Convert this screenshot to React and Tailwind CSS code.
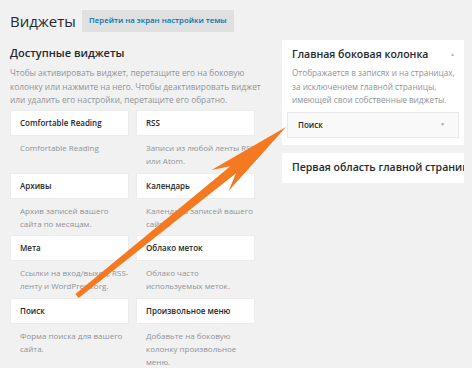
const widgets = [
  { title: "Comfortable Reading", desc: ["Comfortable Reading"] },
  { title: "RSS", desc: ["Записи из любой ленты RSS", "или Atom."] },
  { title: "Архивы", desc: ["Архив записей вашего", "сайта по месяцам."] },
  { title: "Календарь", desc: ["Календарь записей вашего", "сайта."] },
  { title: "Мета", desc: ["Ссылки на вход/выход, RSS-", "ленту и WordPress.org."] },
  { title: "Облако меток", desc: ["Облако часто", "используемых меток."] },
  { title: "Поиск", desc: ["Форма поиска для вашего", "сайта."] },
  { title: "Произвольное меню", desc: ["Добавьте на боковую", "колонку произвольное", "меню."] },
];

const Arrow = () => (
  <svg className="absolute inset-0 pointer-events-none" width="474" height="370" viewBox="0 0 474 370">
    <polygon
      points="286,127 211.5,170 230.4,166.3 75.4,294 78.6,298 236,173.2 228.5,191"
      fill="#f47920"
    />
  </svg>
);

export default function App() {
  return (
    <div
      className="relative w-[474px] h-[370px] overflow-hidden bg-[#f1f1f1] border-r-2 border-b-2 border-white text-[#23282d]"
      style={{ fontFamily: '"Open Sans", "Noto Sans", sans-serif' }}
    >
      <div className="flex pl-[10px] pt-[10px]">
        <div className="w-[245px] shrink-0">
          <div className="flex items-center h-[22px]">
            <h1 className="text-[15px] leading-none font-normal">Виджеты</h1>
            <span className="ml-[6px] w-[152px] bg-[#e0e0e0] text-[#0073aa] text-[7.8px] font-semibold h-[22px] flex items-center justify-center whitespace-nowrap">
              Перейти на экран настройки темы
            </span>
          </div>
          <h2 className="mt-[10px] text-[11px] leading-[22px] font-semibold">Доступные виджеты</h2>
          <p className="mt-[2px] whitespace-nowrap text-[8.3px] leading-[13.5px] text-[#8e9399]">
            Чтобы активировать виджет, перетащите его на боковую
            <br />
            колонку или нажмите на него. Чтобы деактивировать виджет
            <br />
            или удалить его настройки, перетащите его обратно.
          </p>
          <div className="mt-[3.5px] grid grid-cols-2 gap-x-[7px]">
            {widgets.map((w) => (
              <div key={w.title} className="min-h-[62.7px]">
                <div className="h-[26px] bg-white border border-[#ececec] flex items-center px-[9px] text-[8px] font-semibold">
                  {w.title}
                </div>
                <p className="pt-[5px] px-[10px] whitespace-nowrap text-[8px] leading-[13px] text-[#8e9399]">
                  {w.desc.map((line, i) => (
                    <span key={i} className="block">{line}</span>
                  ))}
                </p>
              </div>
            ))}
          </div>
        </div>

        <div className="ml-[27px] mt-[30px] w-[182px] shrink-0">
          <div className="bg-white px-[5px] pt-[5px] pb-[7px]">
            <div className="flex items-center justify-between pl-[5px] h-[20px]">
              <span className="text-[10.5px] font-semibold">Главная боковая колонка</span>
              <span className="text-[5px] text-[#b4b9be] mr-[4px]">▲</span>
            </div>
            <p className="px-[5px] mt-[1px] whitespace-nowrap text-[8.2px] leading-[13.5px] text-[#8e9399]">
              Отображается в записях и на страницах,
              <br />
              за исключением главной страницы,
              <br />
              имеющей свои собственные виджеты.
            </p>
            <div className="mt-[5.5px] h-[26px] bg-[#f9f9f9] border border-[#e8e8e8] flex items-center justify-between pl-[10px] pr-[13px]">
              <span className="text-[8px] font-semibold">Поиск</span>
              <span className="text-[5px] text-[#a0a5aa]">▼</span>
            </div>
          </div>
          <div className="mt-[8px] bg-white h-[30px] flex items-center px-[10px] overflow-hidden whitespace-nowrap">
            <span className="text-[10.5px] font-semibold">Первая область главной страницы</span>
          </div>
        </div>
      </div>
      <Arrow />
    </div>
  );
}
